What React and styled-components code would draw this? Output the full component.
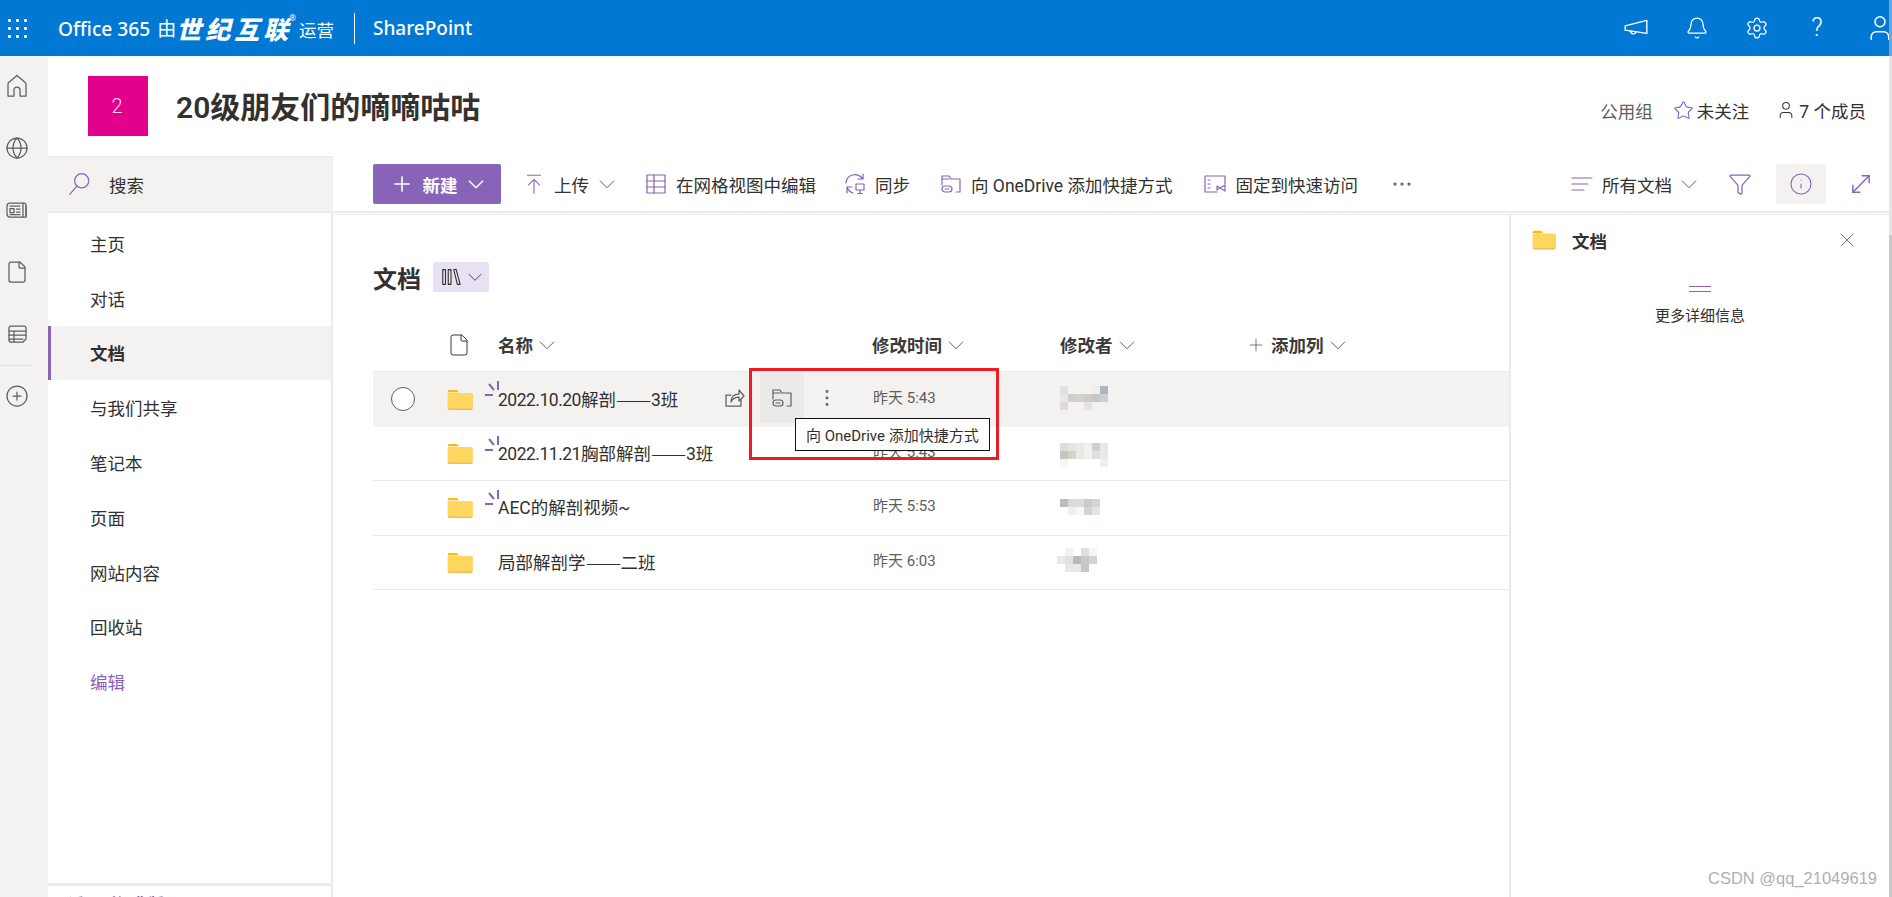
import styled, { createGlobalStyle } from "styled-components";
import {
  Globe,
  File,
  CirclePlus,
  Settings,
  Bell,
  User,
  Star,
  Funnel,
  X,
  Plus,
  Ellipsis,
  EllipsisVertical,
  Info,
  MoveDiagonal,
} from "lucide-react";

const PURPLE = "#8764b8";
const TEXT = "#323130";
const GREY = "#605e5c";
const LINE = "#edebe9";
const CJK = `"Noto Sans CJK SC"`;
const UI_FONT = `Roboto, ${CJK}, sans-serif`;

const GlobalStyle = createGlobalStyle`
  html, body {
    margin: 0;
    height: 100%;
    overflow: hidden;
    background: #fff;
  }
  body {
    font-family: ${UI_FONT};
    font-size: 17.5px;
    color: ${TEXT};
  }
  * { box-sizing: border-box; }
`;

const Page = styled.div`
  position: relative;
  height: 897px;
  overflow: hidden;
  display: flex;
  flex-direction: column;
`;

/* barra azul */
const TopBar = styled.header`
  flex: 0 0 56px;
  background: #0078d4;
  color: #fff;
  display: flex;
  align-items: center;
  padding-left: 8px;
`;

const Waffle = styled.div`
  display: grid;
  grid-template-columns: repeat(3, 3px);
  grid-auto-rows: 3px;
  gap: 5px;
  margin-right: 31px;

  i {
    background: #fff;
    border-radius: 1px;
  }
`;

const Brand = styled.div`
  display: flex;
  align-items: center;
  font-family: "Noto Sans", ${CJK}, sans-serif;
  font-size: 19.2px;
  font-weight: 500;
  white-space: nowrap;
`;

const BrandName = styled.span`
  font-size: 25px;
  font-weight: 900;
  font-style: italic;
  letter-spacing: 4px;
`;

const BrandReg = styled.span`
  font-size: 8px;
  align-self: flex-start;
  margin: 2px 2px 0 -3px;
`;

const BrandOp = styled.span`
  font-size: 17.5px;
  font-weight: 400;
  margin: 2px 0 0 1px;
`;

const BrandGap = styled.span`
  margin: 0 0 0 7px;
  font-weight: 400;
  font-size: 19px;
`;

const BarDivider = styled.div`
  width: 1px;
  height: 31px;
  background: #fff;
  margin: 0 18px 0 20px;
`;

const AppName = styled.span`
  font-family: "Noto Sans", sans-serif;
  font-size: 19px;
  font-weight: 500;
`;

const TopIcons = styled.div`
  margin-left: auto;
  display: flex;
  align-items: center;
  gap: 36px;
  margin-right: -3px;
`;

const HelpMark = styled.span`
  font-size: 25px;
  font-weight: 300;
  line-height: 24px;
  width: 24px;
  text-align: center;
`;

const Body = styled.div`
  flex: 1;
  min-height: 0;
  display: flex;
`;

/* trilho da esquerda */
const Rail = styled.nav`
  flex: 0 0 48px;
  background: #f3f2f1;
  display: flex;
  flex-direction: column;
  align-items: center;
  padding: 18px 14px 0 0;
  color: ${GREY};
`;

const RailItem = styled.div`
  flex: 0 0 ${(p) => p.$h || 62}px;
  display: flex;
  justify-content: center;
`;

const RailLine = styled.div`
  width: 34px;
  height: 1px;
  background: #e6e4e2;
  margin: -13px 0 18px 0;
`;

const Main = styled.div`
  flex: 1;
  min-width: 0;
  display: flex;
  flex-direction: column;
`;

const SiteHeader = styled.div`
  flex: 0 0 100px;
  display: flex;
  padding: 20px 26px 0 40px;
`;

const SiteLogo = styled.div`
  width: 60px;
  height: 60px;
  background: #e3008c;
  color: #fbdcee;
  font-size: 20px;
  font-weight: 300;
  display: flex;
  align-items: center;
  justify-content: center;
  padding-right: 2px;
`;

const SiteTitle = styled.h1`
  margin: 2px 0 0 28px;
  height: 60px;
  line-height: 60px;
  font-size: 30px;
  font-weight: 600;
  color: ${TEXT};
`;

const SiteMeta = styled.div`
  margin-left: auto;
  height: 30px;
  margin-top: 19px;
  display: flex;
  align-items: center;
`;

const MetaItem = styled.span`
  display: flex;
  align-items: center;
  gap: 3px;
  margin-left: ${(p) => p.$gap || 0}px;
  color: ${(p) => p.$color || TEXT};
`;

const Columns = styled.div`
  flex: 1;
  min-height: 0;
  display: flex;
`;

/* navegacao lateral */
const SideNav = styled.aside`
  flex: 0 0 285px;
  display: flex;
  flex-direction: column;
  border-right: 2px solid ${LINE};
  position: relative;
`;

const SearchBox = styled.div`
  flex: 0 0 57px;
  background: #f3f2f1;
  border-top: 1px solid ${LINE};
  border-bottom: 2px solid ${LINE};
  display: flex;
  align-items: center;
  gap: 17px;
  padding-left: 18px;
  margin-bottom: 3px;
  margin-right: -2px;
`;

const NavItem = styled.div`
  flex: 0 0 54.8px;
  display: flex;
  align-items: center;
  padding-left: ${(p) => (p.$active ? 39 : 42)}px;
  border-left: ${(p) => (p.$active ? `3px solid ${PURPLE}` : "none")};
  background: ${(p) => (p.$active ? "#f3f2f1" : "transparent")};
  font-weight: ${(p) => (p.$active ? 700 : 400)};
  color: ${(p) => p.$color || TEXT};
`;

const NavFooter = styled.div`
  position: absolute;
  left: 0;
  right: 0;
  top: 727px;
  border-top: 3px solid ${LINE};
  padding: 5px 0 0 20px;
  color: ${PURPLE};
  font-size: 16px;
  font-weight: 600;
  white-space: nowrap;
`;

const Content = styled.div`
  flex: 1;
  min-width: 0;
  display: flex;
  flex-direction: column;
`;

/* barra de comandos */
const CommandBar = styled.div`
  flex: 0 0 57px;
  padding-left: 40px;
  padding-top: 8px;
  display: flex;
  align-items: flex-start;
  border-bottom: 2px solid ${LINE};
  margin-right: 3px;
`;

const NewButton = styled.button`
  width: 128px;
  height: 40px;
  background: ${PURPLE};
  color: #fff;
  border: 0;
  border-radius: 2px;
  font: 700 17.5px ${UI_FONT};
  display: flex;
  align-items: center;
  justify-content: center;
  gap: 9px;
  margin-right: 22px;
  padding: 0;
`;

const Command = styled.div`
  height: 40px;
  display: flex;
  align-items: center;
  gap: ${(p) => p.$gap ?? 8}px;
  margin-right: ${(p) => p.$right ?? 27}px;
  white-space: nowrap;
  color: ${TEXT};
`;

const Purple = styled.span`
  display: flex;
  color: ${PURPLE};
`;

const Muted = styled.span`
  display: flex;
  color: ${GREY};
`;

const CommandsRight = styled.div`
  margin-left: auto;
  display: flex;
  align-items: flex-start;
`;

const InfoButton = styled.div`
  width: 50px;
  height: 40px;
  background: #f3f2f1;
  border-radius: 2px;
  color: ${PURPLE};
  display: flex;
  align-items: center;
  justify-content: center;
  margin-right: 21px;
`;

const Panels = styled.div`
  flex: 1;
  min-height: 0;
  margin-top: 1px;
  border-top: 1px solid ${LINE};
  display: flex;
  margin-right: 3px;
`;

const Library = styled.section`
  flex: 1;
  min-width: 0;
  padding: 36px 0 0 40px;
`;

const LibraryHead = styled.div`
  display: flex;
  align-items: center;
  height: 62px;
  margin-top: -5px;
`;

const LibraryTitle = styled.h2`
  margin: 0;
  font-size: 24px;
  font-weight: 700;
`;

const ViewChip = styled.div`
  width: 56px;
  height: 30px;
  margin-left: 12px;
  background: #e8e1f3;
  border-radius: 2px;
  display: flex;
  align-items: center;
  justify-content: center;
  gap: 5px;
  color: ${TEXT};
`;

const gridColumns = "74px 51px 374px 188px 186px 1fr";

const HeaderRow = styled.div`
  display: grid;
  grid-template-columns: ${gridColumns};
  height: 64px;
  padding-top: 13px;
  padding-bottom: 3px;
  align-items: center;
  font-weight: 700;
  border-bottom: 1px solid ${LINE};
  color: #3b3a39;
`;

const HeaderCell = styled.div`
  display: flex;
  align-items: center;
  gap: 5px;
  grid-column: ${(p) => p.$col};
  color: inherit;
`;

const FileRow = styled.div`
  display: grid;
  grid-template-columns: ${gridColumns};
  height: 54.5px;
  align-items: center;
  border-bottom: ${(p) => (p.$hover ? "0" : `1px solid ${LINE}`)};
  background: ${(p) => (p.$hover ? "#f3f2f1" : "transparent")};
`;

const RowCheck = styled.div`
  width: 24px;
  height: 24px;
  border-radius: 50%;
  background: #fff;
  border: 1.5px solid ${GREY};
  margin-left: 18px;
`;

const NameCell = styled.div`
  position: relative;
  display: flex;
  align-items: center;
  height: 100%;
  padding-bottom: 2px;
  white-space: nowrap;
`;

const Num = styled.span`
  letter-spacing: -0.5px;
`;

const Dash = styled.span`
  display: inline-block;
  width: 35px;
  font-family: ${CJK}, sans-serif;
  transform: scaleX(1.2);
  transform-origin: left;
`;

const Sparkle = styled.svg`
  position: absolute;
  left: -13px;
  top: 8px;
`;

const RowActions = styled.div`
  margin-left: auto;
  margin-right: 34px;
  display: flex;
  align-items: center;
  height: calc(100% + 2px);
  color: ${GREY};
`;

const ShareBtn = styled.div`
  width: 34px;
  display: flex;
  justify-content: center;
`;

const ShortcutBtn = styled.div`
  position: relative;
  width: 44px;
  height: 50px;
  margin: 0 12px 0 9px;
  background: #ebeae8;
  display: flex;
  align-items: center;
  justify-content: center;
`;

const Tooltip = styled.div`
  position: absolute;
  left: 35px;
  top: 45px;
  z-index: 3;
  height: 33px;
  padding: 0 10px;
  display: flex;
  align-items: center;
  background: #fff;
  border: 1px solid #111;
  font-size: 15px;
  color: ${TEXT};
  white-space: nowrap;
`;

const TimeCell = styled.div`
  font-size: 15px;
  color: ${GREY};
  padding: 0 0 6px 1px;
`;

const Mosaic = styled.div`
  align-self: start;
  margin-top: ${(p) => p.$top}px;
  margin-left: ${(p) => p.$left || 0}px;
  display: grid;
  grid-template-columns: repeat(6, 8px);
  grid-auto-rows: 8px;
`;

/* painel de detalhes */
const Details = styled.aside`
  flex: 0 0 380px;
  border-left: 2px solid ${LINE};
  display: flex;
  flex-direction: column;
  align-items: center;
`;

const DetailsHead = styled.div`
  width: 100%;
  height: 50px;
  padding: 0 30px 0 21px;
  display: flex;
  align-items: center;
  font-weight: 700;
  gap: 16px;
`;

const DetailsClose = styled.span`
  margin-left: auto;
  display: flex;
  color: ${PURPLE};
`;

const MoreLines = styled.div`
  width: 22px;
  height: 6px;
  margin-top: 21px;
  border-top: 1px solid ${PURPLE};
  border-bottom: 1px solid ${PURPLE};
`;

const MoreLabel = styled.div`
  font-size: 15px;
  margin-top: 12px;
`;

/* anotacao vermelha do print */
const RedMark = styled.div`
  position: absolute;
  left: 749px;
  top: 368px;
  width: 250px;
  height: 92px;
  border: 3px solid #ed1c24;
  z-index: 4;
  pointer-events: none;
`;

const Watermark = styled.div`
  position: absolute;
  right: 15px;
  bottom: 9px;
  font: 16.5px "Liberation Sans", sans-serif;
  color: #b0b0b0;
`;

const ScrollEdge = styled.div`
  position: absolute;
  right: 0;
  top: 0;
  bottom: 0;
  width: 3px;
  background: linear-gradient(#6aa6d8 0, #6aa6d8 56px, #e6e6e6 56px, #e6e6e6 235px, #c8c8c8 235px);
`;

function Svg({ size = 24, stroke = 1.25, children }) {
  return (
    <svg
      width={size}
      height={size}
      viewBox="0 0 24 24"
      fill="none"
      stroke="currentColor"
      strokeWidth={stroke}
      strokeLinecap="round"
      strokeLinejoin="round"
    >
      {children}
    </svg>
  );
}

const Chevron = ({ size = 18, stroke = 1 }) => (
  <Svg size={size} stroke={stroke * 1.3}>
    <path d="M3 8l9 9 9-9" />
  </Svg>
);

const HomeIcon = () => (
  <Svg>
    <path d="M3 22V10a2 2 0 0 1 .7-1.5L12 1.5l8.3 7a2 2 0 0 1 .7 1.5v12h-6v-6a3 3 0 0 0-6 0v6z" />
  </Svg>
);

const NewsIcon = () => (
  <Svg>
    <path d="M5 5h14a2 2 0 0 1 2 2v12H5a3 3 0 0 1-3-3V8a3 3 0 0 1 3-3z" />
    <path d="M18 5v14M21 8v10" />
    <rect x="5" y="10.5" width="4" height="4" />
    <path d="M5 8h10M11.5 11h3.5M11.5 14h3.5M5 16.5h10" />
  </Svg>
);

const ListIcon = () => (
  <Svg>
    <path d="M4 6c0-1.2 1-2 2-2h13c1 0 2 .8 2 2v11l-3 3H6c-1 0-2-.8-2-2z" />
    <path d="M4 9h17M4 13h17M4 17h14M9 9v11" />
  </Svg>
);

const Megaphone = () => (
  <Svg size={26}>
    <path d="M22 5v12L2 14V10z" />
    <path d="M7 15c0 2.8 4 3.2 5 .8" />
  </Svg>
);

const SearchIcon = () => (
  <Svg size={26} stroke={1.1}>
    <circle cx="14.5" cy="9" r="6.5" />
    <path d="M10 14 3.5 21.5" />
  </Svg>
);

const UploadIcon = () => (
  <Svg size={22} stroke={1.2}>
    <path d="M5 2.5h14M12 22V7M6 13l6-6 6 6" />
  </Svg>
);

const GridIcon = () => (
  <Svg stroke={1.2}>
    <rect x="3" y="3" width="18" height="18" />
    <path d="M3 9h18M3 15h18M10 3v18" />
  </Svg>
);

const SyncIcon = () => (
  <Svg stroke={1.2}>
    <path d="M3 11a9 9 0 0 1 16-5M20 2v5h-5" />
    <path d="M4 15a9 9 0 0 0 6 6M4 21v-6h5" />
    <rect x="13" y="12" width="8" height="6" />
    <path d="M17 18v3M14.5 21.5h5" />
  </Svg>
);

const FolderLink = ({ size = 24 }) => (
  <Svg size={size} stroke={1.2}>
    <path d="M3 13V4h7l2 3h9v13h-4M3 7h7" />
    <rect x="3" y="14" width="10" height="6" rx="3" />
    <path d="M6 17h4" />
  </Svg>
);

const PinIcon = () => (
  <Svg stroke={1.2}>
    <path d="M22 12V4H2v16h12" />
    <path d="M5 8h2M5 12h2M5 16h2M14 14l8 5v-6l-8 5z" />
  </Svg>
);

const LinesIcon = () => (
  <Svg stroke={1.1}>
    <path d="M2 6h20M2 12h16M2 18h12" />
  </Svg>
);

const BooksIcon = () => (
  <Svg size={22} stroke={1.2}>
    <path d="M3 4h3v16H3zM9 4h3v16H9zM15 4l2.5-.5L22 20h-3z" />
  </Svg>
);

const ShareIcon = () => (
  <Svg>
    <path d="M19 14v6H4V9h5" />
    <path d="M9 16c0-5 3-8 8-8V4l5 6-5 5v-4c-4 0-6 1-8 5z" />
  </Svg>
);

const FolderIcon = ({ width = 26 }) => (
  <svg width={width} height={width * 0.82} viewBox="0 0 32 26">
    <path d="M1 3a2 2 0 0 1 2-2h9l3 3H1z" fill="#ffb900" />
    <path d="M1 5h29a1.5 1.5 0 0 1 1.5 1.5V24a2 2 0 0 1-2 2H3a2 2 0 0 1-2-2z" fill="#f7ba55" />
    <path d="M1 5h29a1.5 1.5 0 0 1 1.5 1.5V22a2 2 0 0 1-2 2H3a2 2 0 0 1-2-2z" fill="#ffd75e" />
  </svg>
);

const NewMark = () => (
  <Sparkle width="17" height="20" viewBox="0 0 17 20" fill="none" stroke={PURPLE} strokeWidth="2">
    <path d="M13 1v9M4 4l5 6M0 15h8" />
  </Sparkle>
);

const navLinks = ["主页", "对话", "文档", "与我们共享", "笔记本", "页面", "网站内容", "回收站", "编辑"];

const mosaics = [
  {
    top: 14,
    cells: [
      "#e3dfdd", "", "", "", "#f0eeec", "#adb5bb",
      "#e8e7e5", "#ccd0cc", "#d5d1cd", "#cfcbc8", "#c6c6c3", "#cdced2",
      "#ddd9d6", "", "", "#e6e2df", "", "",
    ],
  },
  {
    top: 16,
    cells: [
      "#dddddb", "#e5e5e2", "#e8eae8", "#f0f2f2", "#cfcfcb", "#e2e7f0",
      "#c5c7c4", "#d3d3c8", "#e8e8e5", "#f1f1ef", "#e0e0da", "#e8ebee",
      "#f5f5f3", "", "", "", "", "#efeff0",
    ],
  },
  {
    top: 18,
    cells: [
      "#b9bdbe", "#dadada", "#dcdcdc", "#c8cacb", "#d3d5d3", "",
      "", "#f0f0f0", "#f7f7f7", "#d0d5d5", "#e3e6e3", "",
    ],
  },
  {
    top: 12,
    left: -3,
    cells: [
      "", "#f3f0f0", "", "#dfdfdf", "#f5f5f5", "",
      "#efe5e5", "#e2e3df", "#b9bab9", "#c8c9cc", "#d3d4d2", "",
      "", "#e8e8e6", "#e4eaef", "#c6c6c2", "", "",
    ],
  },
];

const files = [
  { num: "2022.10.20", before: "解剖", after: "3班", time: "昨天 5:43", isNew: true, hover: true },
  { num: "2022.11.21", before: "胸部解剖", after: "3班", time: "昨天 5:43", isNew: true },
  { name: "AEC的解剖视频~", time: "昨天 5:53", isNew: true },
  { before: "局部解剖学", after: "二班", time: "昨天 6:03" },
];

export default function App() {
  return (
    <Page>
      <GlobalStyle />
      <TopBar>
        <Waffle>
          {Array.from({ length: 9 }, (_, i) => (
            <i key={i} />
          ))}
        </Waffle>
        <Brand>
          Office 365
          <BrandGap>由</BrandGap>
          <BrandName>世纪互联</BrandName>
          <BrandReg>®</BrandReg>
          <BrandOp>运营</BrandOp>
        </Brand>
        <BarDivider />
        <AppName>SharePoint</AppName>
        <TopIcons>
          <Megaphone />
          <Bell size={24} strokeWidth={1.25} />
          <Settings size={24} strokeWidth={1.25} />
          <HelpMark>?</HelpMark>
          <User size={30} strokeWidth={1.25} />
        </TopIcons>
      </TopBar>

      <Body>
        <Rail>
          <RailItem><HomeIcon /></RailItem>
          <RailItem><Globe size={24} strokeWidth={1.25} /></RailItem>
          <RailItem><NewsIcon /></RailItem>
          <RailItem><File size={24} strokeWidth={1.25} /></RailItem>
          <RailItem $h={56}><ListIcon /></RailItem>
          <RailLine />
          <RailItem><CirclePlus size={24} strokeWidth={1.25} /></RailItem>
        </Rail>

        <Main>
          <SiteHeader>
            <SiteLogo>2</SiteLogo>
            <SiteTitle>20级朋友们的嘀嘀咕咕</SiteTitle>
            <SiteMeta>
              <MetaItem $color={GREY}>公用组</MetaItem>
              <MetaItem $gap={20}>
                <Purple><Star size={21} strokeWidth={1.25} /></Purple>
                未关注
              </MetaItem>
              <MetaItem $gap={27}>
                <User size={20} strokeWidth={1.25} />
                7 个成员
              </MetaItem>
            </SiteMeta>
          </SiteHeader>

          <Columns>
            <SideNav>
              <SearchBox>
                <Purple><SearchIcon /></Purple>
                搜索
              </SearchBox>
              {navLinks.map((label) => (
                <NavItem
                  key={label}
                  $active={label === "文档"}
                  $color={label === "编辑" ? PURPLE : undefined}
                >
                  {label}
                </NavItem>
              ))}
              <NavFooter>返回到经典版</NavFooter>
            </SideNav>

            <Content>
              <CommandBar>
                <NewButton>
                  <Plus size={24} strokeWidth={1.6} />
                  新建
                  <Chevron size={18} stroke={1.5} />
                </NewButton>
                <Command $gap={9} $right={28}>
                  <Purple><UploadIcon /></Purple>
                  上传
                  <Muted><Chevron /></Muted>
                </Command>
                <Command>
                  <Purple><GridIcon /></Purple>
                  在网格视图中编辑
                </Command>
                <Command $right={29}>
                  <Purple><SyncIcon /></Purple>
                  同步
                </Command>
                <Command $right={31}>
                  <Purple><FolderLink /></Purple>
                  向 OneDrive 添加快捷方式
                </Command>
                <Command $right={32}>
                  <Purple><PinIcon /></Purple>
                  固定到快速访问
                </Command>
                <Command>
                  <Muted><Ellipsis size={24} strokeWidth={1.25} /></Muted>
                </Command>
                <CommandsRight>
                  <Command $right={30}>
                    <Purple><LinesIcon /></Purple>
                    所有文档
                    <Muted><Chevron /></Muted>
                  </Command>
                  <Command $right={24}>
                    <Purple><Funnel size={24} strokeWidth={1.25} /></Purple>
                  </Command>
                  <InfoButton><Info size={24} strokeWidth={1.1} /></InfoButton>
                  <Command $right={14}>
                    <Purple><MoveDiagonal size={28} strokeWidth={1.25} /></Purple>
                  </Command>
                </CommandsRight>
              </CommandBar>

              <Panels>
                <Library>
                  <LibraryHead>
                    <LibraryTitle>文档</LibraryTitle>
                    <ViewChip>
                      <BooksIcon />
                      <Chevron size={16} />
                    </ViewChip>
                  </LibraryHead>

                  <HeaderRow>
                    <HeaderCell $col="2"><File size={24} strokeWidth={1} /></HeaderCell>
                    <HeaderCell $col="3">名称 <Muted><Chevron /></Muted></HeaderCell>
                    <HeaderCell $col="4">修改时间 <Muted><Chevron /></Muted></HeaderCell>
                    <HeaderCell $col="5">修改者 <Muted><Chevron /></Muted></HeaderCell>
                    <HeaderCell $col="6">
                      <Muted><Plus size={20} strokeWidth={1} /></Muted>
                      添加列
                      <Muted><Chevron /></Muted>
                    </HeaderCell>
                  </HeaderRow>

                  {files.map((f, i) => (
                    <FileRow key={f.time + i} $hover={f.hover}>
                      <div>{f.hover && <RowCheck />}</div>
                      <FolderIcon />
                      <NameCell>
                        {f.isNew && <NewMark />}
                        {f.name || (
                          <span>
                            {f.num && <Num>{f.num}</Num>}
                            {f.before}
                            <Dash>——</Dash>
                            {f.after}
                          </span>
                        )}
                        {f.hover && (
                          <RowActions>
                            <ShareBtn><ShareIcon /></ShareBtn>
                            <ShortcutBtn>
                              <FolderLink />
                              <Tooltip>向 OneDrive 添加快捷方式</Tooltip>
                            </ShortcutBtn>
                            <EllipsisVertical size={22} strokeWidth={1.25} />
                          </RowActions>
                        )}
                      </NameCell>
                      <TimeCell>{f.time}</TimeCell>
                      <Mosaic $top={mosaics[i].top} $left={mosaics[i].left}>
                        {mosaics[i].cells.map((c, j) => (
                          <span key={j} style={{ background: c || "transparent" }} />
                        ))}
                      </Mosaic>
                    </FileRow>
                  ))}
                </Library>

                <Details>
                  <DetailsHead>
                    <FolderIcon width={24} />
                    文档
                    <DetailsClose><X size={24} strokeWidth={1} /></DetailsClose>
                  </DetailsHead>
                  <MoreLines />
                  <MoreLabel>更多详细信息</MoreLabel>
                </Details>
              </Panels>
            </Content>
          </Columns>
        </Main>
      </Body>

      <RedMark />
      <Watermark>CSDN @qq_21049619</Watermark>
      <ScrollEdge />
    </Page>
  );
}
